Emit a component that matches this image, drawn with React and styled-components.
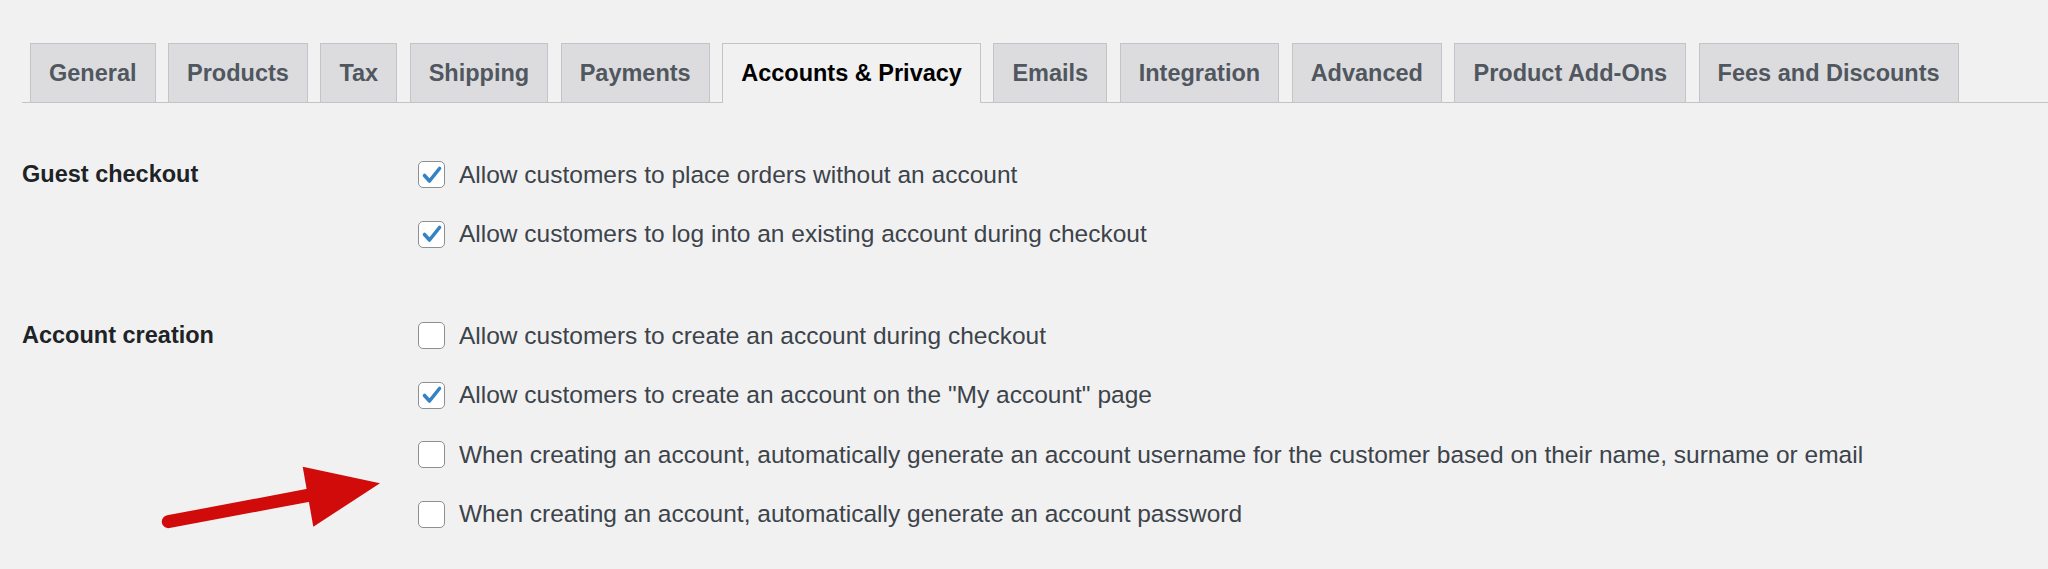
import React from 'react';
import styled, { createGlobalStyle } from 'styled-components';

const GlobalStyle = createGlobalStyle`
  html, body {
    margin: 0;
    padding: 0;
    background: #f1f1f1;
  }
  body {
    font-family: "Liberation Sans", Arial, sans-serif;
    -webkit-font-smoothing: antialiased;
  }
`;

const Page = styled.div`
  position: relative;
  width: 2048px;
  height: 569px;
  box-sizing: border-box;
  padding: 43px 0 0 22px;
  overflow: hidden;
  background: #f1f1f1;
`;

const TabBar = styled.nav`
  display: flex;
  align-items: flex-start;
  gap: 12.5px;
  height: 59px;
  padding-left: 8px;
  border-bottom: 1px solid #c3c4c7;
`;

const Tab = styled.a`
  display: flex;
  align-items: center;
  box-sizing: border-box;
  height: ${(p) => (p.$active ? '60px' : '59px')};
  padding: 0 18px ${(p) => (p.$active ? '1px' : '0')};
  border: 1px solid #c3c4c7;
  border-bottom: none;
  background: ${(p) => (p.$active ? '#f1f1f1' : '#dcdcde')};
  color: ${(p) => (p.$active ? '#000' : '#50575e')};
  font-size: 23.5px;
  font-weight: 700;
  white-space: nowrap;
  text-decoration: none;
`;

const Form = styled.div`
  padding-top: 42px;
  display: flex;
  flex-direction: column;
  gap: 42px;
`;

const Section = styled.div`
  display: grid;
  grid-template-columns: 396px 1fr;
`;

const SectionLabel = styled.div`
  font-size: 23.5px;
  font-weight: 700;
  line-height: 59.5px;
  color: #1d2327;
`;

const Options = styled.div`
  display: flex;
  flex-direction: column;
`;

const Option = styled.label`
  display: flex;
  align-items: center;
  gap: 14px;
  height: 59.5px;
  font-size: 24.5px;
  color: #3c434a;
  white-space: nowrap;
`;

const Box = styled.span`
  flex: none;
  display: flex;
  align-items: center;
  justify-content: center;
  width: 27px;
  height: 27px;
  box-sizing: border-box;
  border: 1.5px solid #8c8f94;
  border-radius: 5px;
  background: #fff;
`;

const ArrowSvg = styled.svg`
  position: absolute;
  left: 150px;
  top: 455px;
`;

const Checkbox = ({ checked }) => (
  <Box>
    {checked && (
      <svg width="22" height="22" viewBox="0 0 22 22">
        <path
          d="M3.5 11.5 L8.5 17 L18.5 4.5"
          fill="none"
          stroke="#3582c4"
          strokeWidth="3.6"
          strokeLinecap="round"
          strokeLinejoin="round"
        />
      </svg>
    )}
  </Box>
);

const tabs = [
  'General',
  'Products',
  'Tax',
  'Shipping',
  'Payments',
  'Accounts & Privacy',
  'Emails',
  'Integration',
  'Advanced',
  'Product Add-Ons',
  'Fees and Discounts',
];

const sections = [
  {
    label: 'Guest checkout',
    options: [
      { text: 'Allow customers to place orders without an account', checked: true },
      { text: 'Allow customers to log into an existing account during checkout', checked: true },
    ],
  },
  {
    label: 'Account creation',
    options: [
      { text: 'Allow customers to create an account during checkout', checked: false },
      { text: 'Allow customers to create an account on the "My account" page', checked: true },
      {
        text: 'When creating an account, automatically generate an account username for the customer based on their name, surname or email',
        checked: false,
      },
      { text: 'When creating an account, automatically generate an account password', checked: false },
    ],
  },
];

export default function App() {
  return (
    <>
      <GlobalStyle />
      <Page>
        <TabBar>
          {tabs.map((t) => (
            <Tab key={t} $active={t === 'Accounts & Privacy'}>
              {t}
            </Tab>
          ))}
        </TabBar>
        <Form>
          {sections.map((s) => (
            <Section key={s.label}>
              <SectionLabel>{s.label}</SectionLabel>
              <Options>
                {s.options.map((o) => (
                  <Option key={o.text}>
                    <Checkbox checked={o.checked} />
                    <span>{o.text}</span>
                  </Option>
                ))}
              </Options>
            </Section>
          ))}
        </Form>
        <ArrowSvg width="240" height="85" viewBox="0 0 240 85">
          <line x1="18.3" y1="66.7" x2="160" y2="40" stroke="#d10a0a" strokeWidth="13" strokeLinecap="round" />
          <polygon points="152.7,11.7 163.3,71.7 230,28.3" fill="#d10a0a" />
        </ArrowSvg>
      </Page>
    </>
  );
}
